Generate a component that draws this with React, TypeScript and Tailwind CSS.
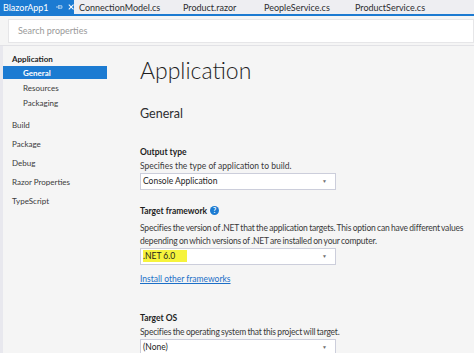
const tabs = ['ConnectionModel.cs', 'Product.razor', 'PeopleService.cs', 'ProductService.cs']
const tabX = ['w-[104px]', 'w-[81px]', 'w-[91px]', 'w-[110px]']

const navItems = ['Build', 'Package', 'Debug', 'Razor Properties', 'TypeScript']

function Select({ value, highlight }: { value: string; highlight?: boolean }) {
  return (
    <div className="w-[196px] h-[17px] bg-white border border-[#cccedb] flex items-center justify-between pl-[2px] pr-[8px]">
      <span className={highlight ? 'bg-[#f6f33c] pr-[12px] text-[#1e1e1e]' : 'text-[#1e1e1e]'}>{value}</span>
      <span className="text-[#717171] text-[5px] leading-none">▼</span>
    </div>
  )
}

export default function App() {
  return (
    <div className="w-[474px] h-[353px] overflow-hidden bg-[#f5f5f5] font-['Lato',sans-serif] text-[#1e1e1e]">
      {/* Tab strip */}
      <div className="h-[14px] bg-[#eeeef2] flex items-stretch text-[9px] leading-none">
        <div className="w-[74px] shrink-0 bg-[#1c7bd2] text-white flex items-center pl-[3px]">
          <span>BlazorApp1</span>
          <svg width="9" height="8" viewBox="0 0 9 8" className="ml-[7px]" fill="none" stroke="#d6e8f8" strokeWidth="1">
            <path d="M0 4h3M3.5 1.5v5M3.5 2.5h4v3h-4" />
          </svg>
          <svg width="8" height="8" viewBox="0 0 8 8" className="ml-[5px]" stroke="white" strokeWidth="1.3">
            <path d="M1 1l6 6M7 1l-6 6" />
          </svg>
        </div>
        {tabs.map((t, i) => (
          <div key={t} className={`${tabX[i]} shrink-0 flex items-center pl-[5px] text-[#2d2d30]`}>
            {t}
          </div>
        ))}
      </div>
      <div className="h-[2px] bg-[#1c7bd2]" />

      {/* Search */}
      <div className="h-[30px] pl-[8px] pt-[3px] border-b border-[#e2e2e6]">
        <div className="h-[24px] bg-white border border-[#e6e6e8] flex items-center pl-[9px] text-[9px] text-[#9a9a9a]">
          Search properties
        </div>
      </div>

      <div className="flex h-full">
        {/* Nav */}
        <div className="w-[130px] shrink-0 flex border-l-[3px] border-[#e8e8ee]">
          <div className="flex-1 pt-[6px] text-[8px]">
            <div className="pl-[9px] font-bold h-[14px] flex items-center">Application</div>
            <div className="w-[104px] h-[13px] bg-[#1c7bd2] text-white font-bold pl-[20px] flex items-center">General</div>
            <div className="pl-[20px] h-[15px] flex items-center mt-[1px] text-[#3a3a3a]">Resources</div>
            <div className="pl-[20px] h-[15px] flex items-center text-[#3a3a3a]">Packaging</div>
            <div className="mt-[5px] flex flex-col">
              {navItems.map((n) => (
                <div key={n} className="pl-[9px] h-[19px] flex items-center text-[#3a3a3a]">{n}</div>
              ))}
            </div>
          </div>
        </div>

        {/* Main */}
        <div className="flex-1 min-w-0 pl-[10px] text-[8.5px]">
          <h1 className="text-[23px] font-light leading-none mt-[13px] text-[#1e1e1e]">Application</h1>
          <h2 className="text-[12.5px] leading-none mt-[26px] text-[#2d2d30]">General</h2>

          <div className="mt-[24px] font-bold leading-[14px]">Output type</div>
          <div className="text-[#3a3a3a] leading-[14px]">Specifies the type of application to build.</div>
          <Select value="Console Application" />

          <div className="mt-[14px] font-bold flex items-center gap-[3px] leading-[14px]">
            Target framework
            <span className="w-[9px] h-[9px] rounded-full bg-[#1c7bd2] text-white text-[7px] font-bold flex items-center justify-center leading-none">?</span>
          </div>
          <div className="text-[#3a3a3a] leading-[13px] whitespace-nowrap mt-[4px] tracking-[-0.2px] [word-spacing:-0.5px]">
            Specifies the version of .NET that the application targets. This option can have different values
            <br />
            depending on which versions of .NET are installed on your computer.
          </div>
          <Select value=".NET 6.0" highlight />

          <div className="mt-[8px] text-[#1c6fc7] underline">Install other frameworks</div>

          <div className="mt-[26px] font-bold leading-[14px]">Target OS</div>
          <div className="text-[#3a3a3a] leading-[14px] tracking-[-0.2px] [word-spacing:-0.5px]">Specifies the operating system that this project will target.</div>
          <Select value="(None)" />
        </div>
      </div>
    </div>
  )
}
